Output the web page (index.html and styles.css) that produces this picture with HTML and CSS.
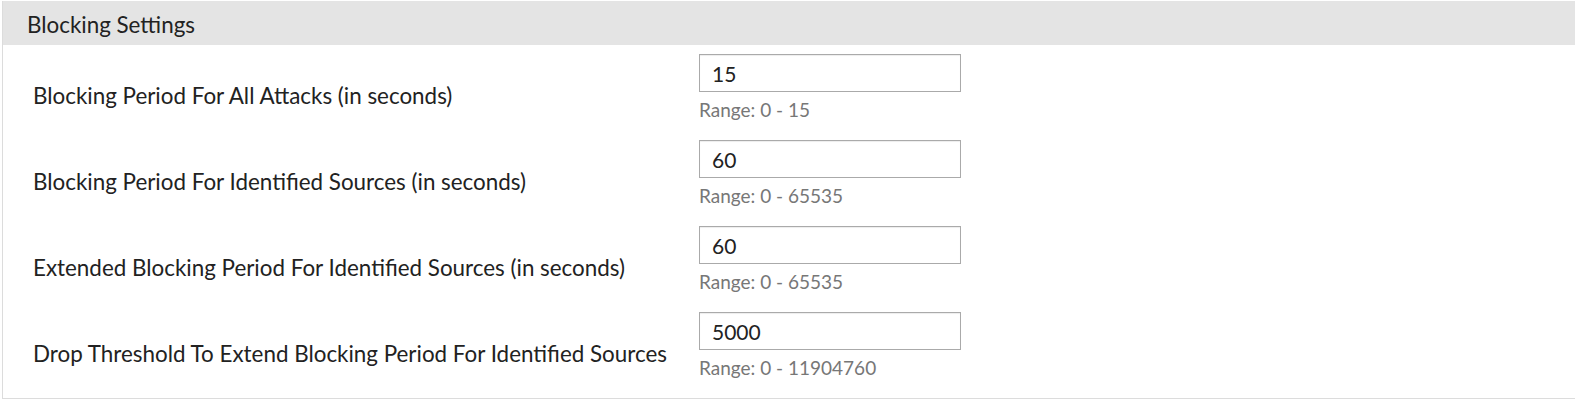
FILE: index.html
```html
<!DOCTYPE html>
<html lang="en">
<head>
    <meta charset="UTF-8">
    <meta name="viewport" content="width=device-width, initial-scale=1.0">
    <title>Blocking Settings</title>
    <link rel="stylesheet" href="styles.css">
</head>
<body>
    <div class="viewport">
        <div class="page">
            <div class="panel">
                <div class="panel-header">Blocking Settings</div>

                <div class="row">
                    <label class="row-label" for="all-attacks">Blocking Period For All Attacks (in seconds)</label>
                    <div class="field">
                        <input id="all-attacks" type="text" value="15">
                        <div class="hint">Range: 0 - 15</div>
                    </div>
                </div>

                <div class="row">
                    <label class="row-label" for="identified">Blocking Period For Identified Sources (in seconds)</label>
                    <div class="field">
                        <input id="identified" type="text" value="60">
                        <div class="hint">Range: 0 - 65535</div>
                    </div>
                </div>

                <div class="row">
                    <label class="row-label" for="extended">Extended Blocking Period For Identified Sources (in seconds)</label>
                    <div class="field">
                        <input id="extended" type="text" value="60">
                        <div class="hint">Range: 0 - 65535</div>
                    </div>
                </div>

                <div class="row">
                    <label class="row-label" for="threshold">Drop Threshold To Extend Blocking Period For Identified Sources</label>
                    <div class="field">
                        <input id="threshold" type="text" value="5000">
                        <div class="hint">Range: 0 - 11904760</div>
                    </div>
                </div>
            </div>
        </div>
    </div>
</body>
</html>
```

FILE: styles.css
```css
html, body {
    margin: 0;
    padding: 0;
    overflow: hidden;
}

body {
    font-family: Lato, "Open Sans", sans-serif;
    color: #222;
    background: #fff;
}

.viewport {
    height: 399px;
    overflow-y: scroll;
}

.viewport::-webkit-scrollbar {
    width: 9px;
}

.viewport::-webkit-scrollbar-track {
    background: #f0f0f0;
}

.viewport::-webkit-scrollbar-thumb {
    background: #c1c1c1;
    border-left: 2px solid #f0f0f0;
}

.page {
    padding: 1px 0 1542px 2px;
}

.panel {
    border-left: 1px solid #dcdcdc;
    border-bottom: 1px solid #dcdcdc;
    padding-bottom: 9px;
}

.panel-header {
    height: 44px;
    display: flex;
    align-items: center;
    padding: 2px 0 0 24px;
    box-sizing: border-box;
    background: #e4e4e4;
    font-size: 22.4px;
    color: #222;
}

.row {
    display: grid;
    grid-template-columns: 666px 262px;
    padding: 9px 0 11px 30px;
    height: 86px;
    box-sizing: border-box;
}

.row-label {
    align-self: center;
    padding-top: 15px;
    font-size: 22.4px;
    color: #222;
}

.field input {
    display: block;
    width: 262px;
    height: 38px;
    box-sizing: border-box;
    border: 1px solid #aaa;
    border-radius: 0;
    padding: 0 12px;
    font-family: inherit;
    font-size: 21px;
    color: #222;
    box-shadow: inset 0 1px 1px rgba(0, 0, 0, 0.075);
    outline: none;
}

.hint {
    margin-top: 7px;
    line-height: 22px;
    font-size: 19px;
    color: #777;
}
```
